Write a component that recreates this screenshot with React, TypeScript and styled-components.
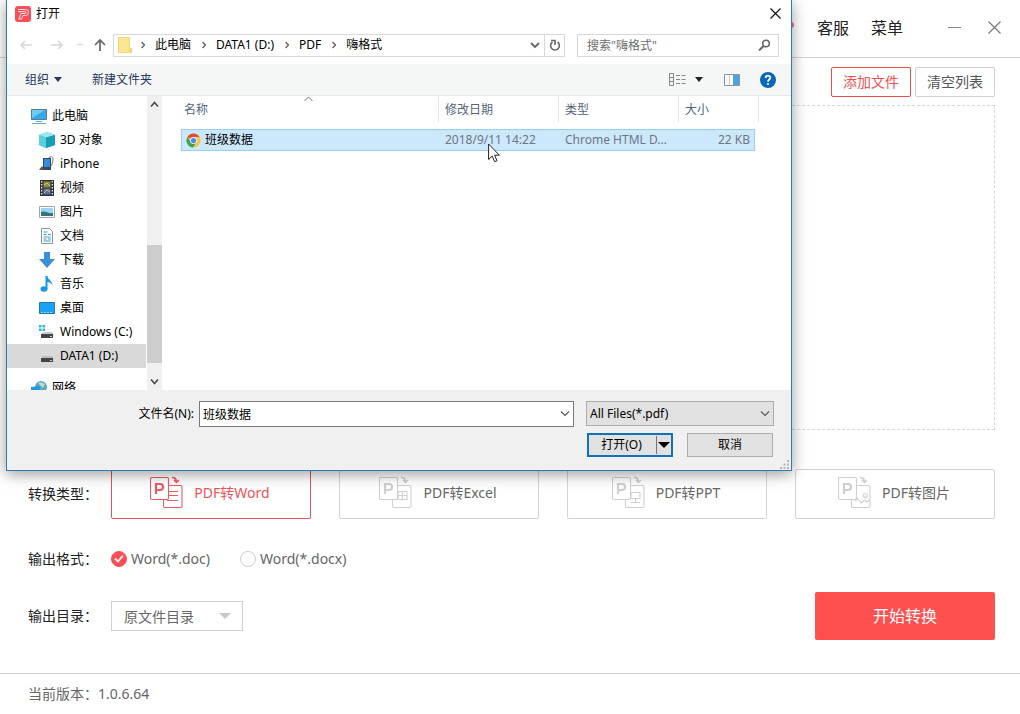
import React, { useState } from 'react';
import styled, { createGlobalStyle, css } from 'styled-components';

const GlobalStyle = createGlobalStyle`
  * { box-sizing: border-box; }
  body { margin: 0; background: #fff; }
  body, button, input, select {
    font-family: "Noto Sans", "Noto Sans CJK SC", sans-serif;
  }
  button { padding: 0; border: 0; background: none; color: inherit; }
  svg { display: block; flex: none; }
`;

/* ---------- main window ---------- */

const AppWindow = styled.div`
  position: relative;
  display: flex;
  flex-direction: column;
  min-height: 100vh;
  overflow: hidden;
  font-size: 14px;
  line-height: 20px;
  color: #222;
`;

const Header = styled.header`
  display: flex;
  align-items: center;
  justify-content: flex-end;
  height: 58px;
  padding: 0 18px 2px;
  border-bottom: 1px solid #d2d4d6;
`;

const HeaderLink = styled.button`
  margin-right: 22px;
  font-size: 16px;
  line-height: 24px;
  color: #222;
`;

const Dot = styled.span`
  width: 6px;
  height: 6px;
  margin: 0 23px 6px 0;
  border-radius: 50%;
  background: #f76f8e;
`;

const WindowControls = styled.div`
  display: flex;
  gap: 24px;
  margin-left: 21px;
`;

const WindowButton = styled.button`
  display: grid;
  place-items: center;
  width: 16px;
  height: 16px;
`;

const Main = styled.main`
  display: flex;
  flex: 1;
  flex-direction: column;
  padding: 9px 25px 33px 28px;
`;

const Actions = styled.div`
  display: flex;
  justify-content: flex-end;
  gap: 4px;
`;

const ActionButton = styled.button<{ $primary?: boolean }>`
  width: 80px;
  height: 30px;
  padding-bottom: 2px;
  border: 1px solid ${p => (p.$primary ? '#e8504f' : '#d0d0d0')};
  border-radius: 2px;
  font-size: 14px;
  color: ${p => (p.$primary ? '#f0504f' : '#555')};
`;

const DropArea = styled.section`
  flex: 1;
  min-height: 240px;
  margin-top: 8px;
  border: 1px dashed #d8d8d8;
`;

const FormRow = styled.div<{ $top: number }>`
  display: flex;
  align-items: center;
  margin-top: ${p => p.$top}px;
`;

const RowLabel = styled.span`
  flex: none;
  width: 83px;
`;

const Types = styled.div`
  display: grid;
  flex: 1;
  grid-template-columns: repeat(4, 1fr);
  gap: 28px;
`;

const TypeCard = styled.button<{ $active?: boolean }>`
  display: flex;
  align-items: center;
  justify-content: center;
  gap: 11px;
  height: 50px;
  padding: 0 2px 4px 0;
  border: 1px solid ${p => (p.$active ? '#e8505b' : '#d4d4d4')};
  border-radius: 2px;
  font-size: 14px;
  color: ${p => (p.$active ? '#f0525a' : '#666')};
  svg { color: ${p => (p.$active ? '#ee5a62' : '#cfcfcf')}; }
`;

const Option = styled.label`
  position: relative;
  display: flex;
  align-items: center;
  gap: 4px;
  margin-right: 30px;
  color: #666;
  svg { position: absolute; left: 3px; top: 4px; }
`;

const Radio = styled.input`
  appearance: none;
  width: 16px;
  height: 16px;
  margin: 0;
  border: 1px solid #ccc;
  border-radius: 50%;
  &:checked { border-color: #fb4f55; background: #fb4f55; }
`;

const SelectBox = styled.div`
  position: relative;
  svg { position: absolute; right: 12px; top: 12px; pointer-events: none; }
`;

const FolderSelect = styled.select`
  appearance: none;
  display: block;
  width: 132px;
  height: 30px;
  padding: 1px 12px 0;
  border: 1px solid #d0d0d0;
  background: #fff;
  font-size: 14px;
  color: #666;
`;

const StartButton = styled.button`
  width: 180px;
  height: 48px;
  margin-left: auto;
  padding-bottom: 2px;
  border-radius: 2px;
  background: #ff5050;
  font-size: 16px;
  color: #fff;
`;

const StatusBar = styled.footer`
  height: 41px;
  padding: 10px 28px;
  border-top: 1px solid #d4d4d4;
  color: #666;
`;

/* ---------- file dialog ---------- */

const Dialog = styled.div`
  position: absolute;
  left: 6px;
  top: 0;
  width: 786px;
  border: 1px solid #2c7cb0;
  border-top: 0;
  background: #fff;
  box-shadow: 0 3px 14px rgba(0, 0, 0, 0.4);
  font-size: 12px;
  line-height: 16px;
  color: #000;
`;

const TitleBar = styled.div`
  display: flex;
  align-items: center;
  gap: 5px;
  height: 27px;
  padding: 0 10px 0 8px;
  button { margin-left: auto; }
`;

const NavBar = styled.div`
  display: flex;
  align-items: center;
  height: 37px;
  padding: 0 12px 1px;
`;

const NavButton = styled.button<{ $gap: number }>`
  margin-right: ${p => p.$gap}px;
`;

const AddressBar = styled.div`
  display: flex;
  align-items: center;
  flex: 1;
  height: 23px;
  margin-right: 12px;
  padding-left: 4px;
  border: 1px solid #d9d9d9;
`;

const Crumb = styled.button`
  display: flex;
  align-items: center;
  gap: 10px;
  margin-right: 2px;
  padding-left: 9px;
  font-size: 12px;
  line-height: 16px;
`;

const AddressMenu = styled.button`
  margin-left: auto;
  margin-right: 4px;
`;

const Refresh = styled.button`
  display: grid;
  place-items: center;
  width: 20px;
  height: 21px;
  border-left: 1px solid #d9d9d9;
`;

const SearchBox = styled.label`
  display: flex;
  align-items: center;
  width: 202px;
  height: 23px;
  padding: 0 7px 0 9px;
  border: 1px solid #d9d9d9;
`;

const SearchInput = styled.input`
  flex: 1;
  min-width: 0;
  padding: 0;
  border: 0;
  outline: 0;
  font-size: 12px;
  &::placeholder { color: #6d6d6d; opacity: 1; }
`;

const CommandBar = styled.div`
  display: flex;
  align-items: center;
  height: 32px;
  padding: 0 15px 0 18px;
  border-bottom: 1px solid #e3e8ea;
  background: #f5f7f7;
  color: #26385c;
`;

const Command = styled.button<{ $gap: number }>`
  display: flex;
  align-items: center;
  gap: 5px;
  margin-right: ${p => p.$gap}px;
  font-size: 12px;
  line-height: 16px;
`;

const ViewCommand = styled(Command)`
  gap: 9px;
`;

const Spacer = styled.span`
  flex: 1;
`;

const DialogBody = styled.div`
  display: flex;
  height: 294px;
  overflow: hidden;
`;

const Sidebar = styled.ul`
  width: 139px;
  margin: 0 1px 0 0;
  padding: 8px 0 0;
  list-style: none;
`;

const Place = styled.li<{ $root?: boolean; $selected?: boolean; $apart?: boolean }>`
  display: flex;
  align-items: center;
  gap: 5px;
  height: 24px;
  margin-top: ${p => (p.$apart ? 8 : 0)}px;
  padding-left: ${p => (p.$root ? 24 : 32)}px;
  white-space: nowrap;
  ${p => p.$selected && css`background: #d9d9d9;`}
`;

const ScrollTrack = styled.div`
  display: flex;
  flex-direction: column;
  align-items: center;
  width: 15px;
  margin-right: 1px;
  padding: 5px 0;
  background: #f0f0f0;
`;

const ScrollThumb = styled.div`
  width: 15px;
  height: 118px;
  margin: auto 0 15px;
  background: #cdcdcd;
`;

const FileArea = styled.div`
  position: relative;
  flex: 1;
  padding: 0 36px 0 18px;
`;

const FileTable = styled.table`
  width: 100%;
  table-layout: fixed;
  border-spacing: 0;
`;

const ColumnHead = styled.th<{ $width?: number }>`
  position: relative;
  width: ${p => (p.$width ? p.$width + 'px' : 'auto')};
  height: 33px;
  padding: 0 0 6px ${p => (p.$width ? 6 : 3)}px;
  font-weight: 400;
  text-align: left;
  color: #56647b;
  &::after {
    content: "";
    position: absolute;
    right: 0;
    top: 0;
    height: 26px;
    border-right: 1px solid #e5e5e5;
  }
  &:last-child::after { right: -4px; }
`;

const Cell = styled.td<{ $right?: boolean }>`
  height: 22px;
  padding: 0 4px 0 6px;
  border: solid #99cdf2;
  border-width: 1px 0;
  background: #cce8ff;
  color: #6d7780;
  text-align: ${p => (p.$right ? 'right' : 'left')};
  white-space: nowrap;
  &:first-child { border-left-width: 1px; padding-left: 4px; color: #000; }
  &:last-child { border-right-width: 1px; }
`;

const FileName = styled.span`
  display: flex;
  align-items: center;
  gap: 4px;
`;

const SortMark = styled.svg`
  position: absolute;
  left: 141px;
  top: 0;
`;

const Pointer = styled.svg`
  position: absolute;
  left: 481px;
  top: 143px;
`;

const DialogFooter = styled.div`
  position: relative;
  height: 80px;
  padding: 11px 17px 0 16px;
  background: #f0f0f0;
`;

const FooterLine = styled.div`
  display: flex;
  justify-content: flex-end;
  align-items: flex-start;
  margin-bottom: 6px;
`;

const NameLabel = styled.label`
  margin: 5px 5px 0 0;
`;

const Combo = styled.div<{ $width: number }>`
  position: relative;
  width: ${p => p.$width}px;
  svg { position: absolute; right: 4px; top: 10px; pointer-events: none; }
  & + & { margin-left: 12px; }
`;

const NameInput = styled.input`
  display: block;
  width: 100%;
  height: 26px;
  padding: 0 20px 0 3px;
  border: 1px solid #7a7a7a;
  background: #fff;
  font-size: 12px;
`;

const FilterSelect = styled.select`
  appearance: none;
  display: block;
  width: 100%;
  height: 25px;
  padding: 0 3px;
  border: 1px solid #adadad;
  border-radius: 0;
  background: #e1e1e1;
  font-size: 12px;
  color: #000;
`;

const SplitButton = styled.div`
  display: flex;
  width: 86px;
  height: 24px;
  margin-right: 14px;
  border: 2px solid #1172b6;
  background: #e1e1e1;
`;

const OpenButton = styled.button`
  flex: 1;
  padding-right: 2px;
  font-size: 12px;
  line-height: 16px;
`;

const OpenMenu = styled.button`
  display: grid;
  place-items: center;
  width: 15px;
  margin: 1px 0;
  border-left: 1px solid #777;
`;

const CancelButton = styled.button`
  width: 86px;
  height: 24px;
  margin-right: 1px;
  border: 1px solid #adadad;
  background: #e1e1e1;
  font-size: 12px;
  line-height: 16px;
`;

const Grip = styled.svg`
  position: absolute;
  right: 2px;
  bottom: 1px;
`;

/* ---------- drawings ---------- */

const Chevron = ({ d, w, h, color = '#555', width = 1.5 }: { d: string; w: number; h: number; color?: string; width?: number }) => (
  <svg width={w} height={h} viewBox={`0 0 ${w} ${h}`} fill="none" stroke={color} strokeWidth={width}>
    <path d={d} />
  </svg>
);

const Triangle = ({ w, h, color }: { w: number; h: number; color: string }) => (
  <svg width={w} height={h} viewBox={`0 0 ${w} ${h}`} fill={color}>
    <path d={`M0 0H${w}L${w / 2} ${h}Z`} />
  </svg>
);

const Cross = ({ size, color }: { size: number; color: string }) => (
  <svg width={size} height={size} viewBox={`0 0 ${size} ${size}`} stroke={color} strokeWidth="1.2">
    <path d={`M.5 .5L${size - 0.5} ${size - 0.5}M${size - 0.5} .5L.5 ${size - 0.5}`} />
  </svg>
);

const badges = {
  word: <path d="M19 15.500h9M19 19.500h9M17 24.500h11" />,
  excel: <path d="M19 15.500h9v8h-9zM23.500 15.500v8M19 19.500h9" />,
  ppt: <path d="M19 16.500h9v6h-9zM23.500 22.500v4M19 26.500h9" />,
  image: (
    <>
      <circle cx="27.500" cy="19.500" r="2" />
      <path d="M17 25l2.500-2.500 4 4.500 3-3 2 2 3.500-2" />
    </>
  ),
};

const ConvertIcon = ({ kind }: { kind: keyof typeof badges }) => (
  <svg width="33" height="32" viewBox="0 0 33 32" fill="none" stroke="currentColor" strokeWidth="1.100">
    <rect x=".5" y="1.500" width="18" height="22" rx="1.500" />
    <path d="M18.500 9.500H30.500a1.500 1.500 0 0 1 1.500 1.500V30a1.500 1.500 0 0 1-1.500 1.500H15a1.500 1.500 0 0 1-1.500-1.500V23.500" />
    <path d="M22 1.500c3 0 4.500 1.500 4.500 4.500M24 4l2.500 2.500L29 4" strokeWidth="1.500" />
    <path d="M6 18V8h4a2.800 2.800 0 0 1 0 6H6" strokeWidth="2.200" />
    {badges[kind]}
  </svg>
);

const AppLogo = () => (
  <svg width="16" height="16" viewBox="0 0 16 16" fill="none">
    <rect width="16" height="16" rx="3" fill="#f4505a" />
    <path d="M3 3.500h7.500a3 3 0 0 1 0 6H8L6.500 13H3.800L6 7.500h4a.800.800 0 0 0 0-1.800H3" stroke="#fff" strokeWidth=".8" />
  </svg>
);

const Arrow = ({ d, color, w }: { d: string; color: string; w: number }) => (
  <svg width={w} height="14" viewBox={`0 0 ${w} 14`} fill="none" stroke={color} strokeWidth="1.700">
    <path d={d} />
  </svg>
);

const Chrome = () => (
  <svg width="15" height="15" viewBox="0 0 16 16">
    <circle cx="8" cy="8" r="7.500" fill="#f7c640" />
    <path d="M8 8L1.500 4.250A7.500 7.500 0 0 1 14.500 4.250H8Z" fill="#dd4b3e" />
    <path d="M1.500 4.250A7.500 7.500 0 0 0 7.600 15.500L11 9.500 8 8 5 9.500Z" fill="#3aa457" />
    <circle cx="8" cy="8" r="3.700" fill="#f4f8f6" />
    <circle cx="8" cy="8" r="2.800" fill="#4a8af0" />
  </svg>
);

const placeArt: Record<string, React.ReactNode> = {
  pc: (
    <>
      <path d="M.5 1.500h15v10H.5z" fill="#35a8e8" stroke="#4f7f9d" />
      <path d="M1 2h13L1 10z" fill="#73caf5" />
      <path d="M5 13.500h6M1 15.500h14" stroke="#7aa1bb" />
    </>
  ),
  cube: (
    <>
      <path d="M0 3l8-3 8 3v10l-9 3-7-3z" fill="#2bb6c9" />
      <path d="M0 3l8-3 8 3-9 2.500z" fill="#9fe7ee" />
      <path d="M0 3l7 2.500V16l-7-3z" fill="#5bd0dc" />
      <path d="M7 5.500L16 3v10l-9 3z" fill="#159db8" />
    </>
  ),
  phone: (
    <>
      <path d="M9 3c1-3 5-3 5 0s-1 5-2 7" fill="none" stroke="#777" />
      <path d="M4 2h8v12H4z" fill="#34495c" />
      <path d="M5 3h6v8H5z" fill="#2f8ede" />
      <path d="M0 14l3-4 3 4z" fill="#555" />
    </>
  ),
  film: (
    <>
      <path d="M1 0h14v16H1z" fill="#30323b" />
      <path d="M4.500 1.500h7v6h-7z" fill="#8b8d3f" />
      <path d="M4.500 8.500h7v6h-7z" fill="#5a6da8" />
      <path d="M2.700 1v15M13.300 1v15" stroke="#e9e9e9" strokeWidth="1.300" strokeDasharray="1.500 1.500" />
      <path d="M5 5l3-2 3 3M5 13l3-3 3 2" stroke="#d8c75a" fill="none" />
    </>
  ),
  picture: (
    <>
      <path d="M.5 2.500h15v11H.5z" fill="#fff" stroke="#9aa7ad" />
      <path d="M2 4h12v8H2z" fill="#9bd4f3" />
      <path d="M2 8c4-2 7 2 12 1v3H2z" fill="#35737e" />
    </>
  ),
  doc: (
    <>
      <path d="M2.500.5h8l3 3v12h-11z" fill="#fff" stroke="#8a979d" />
      <path d="M4.500 4h4M4.500 6.500h3M9 6.500h3M4.500 9h7M4.500 11h3M9 11h3M4.500 13h7" stroke="#3c9cc4" />
    </>
  ),
  down: <path d="M5 0h6v7h5l-8 9-8-9h5z" fill="#3b8fd6" />,
  note: (
    <>
      <ellipse cx="5" cy="13" rx="3.500" ry="2.800" fill="#1499e8" />
      <path d="M6.500 0h2c0 4 5 4 5 10-1-3-3-4-5-4v7h-2z" fill="#1499e8" />
    </>
  ),
  desktop: (
    <>
      <path d="M.5 2.500h15v11H.5z" fill="#1aa0f5" stroke="#2474ae" />
      <path d="M2 12.500h12" stroke="#8fd5ff" strokeDasharray="2 1" />
    </>
  ),
  winDrive: (
    <>
      <path d="M0 1h2.500v2.500H0zM3.500 1H6v2.500H3.500zM0 4.500h2.500V7H0zM3.500 4.500H6V7H3.500z" fill="#22b8dc" />
      <path d="M4 8h9l2 3H2z" fill="#c9c9c9" />
      <path d="M2 10h12v4H2z" fill="#42464a" />
      <path d="M11 12.500h2" stroke="#b7e0b0" />
    </>
  ),
  drive: (
    <>
      <path d="M4 8h9l2 3H2z" fill="#bbb" />
      <path d="M2 10h12v4H2z" fill="#42464a" />
      <path d="M11 12.500h2" stroke="#b7e0b0" />
    </>
  ),
  network: (
    <>
      <circle cx="10" cy="7" r="6" fill="#5fa7c6" />
      <path d="M7 3c3-2 5 0 7 1l-2 4z" fill="#b9dec9" />
      <path d="M0 7l9-1v8H0z" fill="#2996d8" />
    </>
  ),
};

const PlaceIcon = ({ name }: { name: string }) => (
  <svg width="16" height="16" viewBox="0 0 16 16">{placeArt[name]}</svg>
);

/* ---------- data ---------- */

const places = [
  { icon: 'pc', label: '此电脑', root: true },
  { icon: 'cube', label: '3D 对象' },
  { icon: 'phone', label: 'iPhone' },
  { icon: 'film', label: '视频' },
  { icon: 'picture', label: '图片' },
  { icon: 'doc', label: '文档' },
  { icon: 'down', label: '下载' },
  { icon: 'note', label: '音乐' },
  { icon: 'desktop', label: '桌面' },
  { icon: 'winDrive', label: 'Windows (C:)' },
  { icon: 'drive', label: 'DATA1 (D:)', selected: true },
  { icon: 'network', label: '网络', root: true, apart: true },
];

const crumbs = ['此电脑', 'DATA1 (D:)', 'PDF', '嗨格式'];

const types: { kind: keyof typeof badges; label: string }[] = [
  { kind: 'word', label: 'PDF转Word' },
  { kind: 'excel', label: 'PDF转Excel' },
  { kind: 'ppt', label: 'PDF转PPT' },
  { kind: 'image', label: 'PDF转图片' },
];

const OpenDialog = () => (
  <Dialog role="dialog" aria-label="打开">
    <TitleBar>
      <AppLogo />
      <span>打开</span>
      <button aria-label="关闭"><Cross size={11} color="#111" /></button>
    </TitleBar>

    <NavBar>
      <NavButton $gap={17} aria-label="后退"><Arrow w={14} d="M13 7H2M6 3L2 7l4 4" color="#d8d8d8" /></NavButton>
      <NavButton $gap={13} aria-label="前进"><Arrow w={14} d="M1 7h11M8 3l4 4-4 4" color="#d8d8d8" /></NavButton>
      <NavButton $gap={11} aria-label="最近"><Chevron w={6} h={4} d="M0 1.500h6" color="#ddd" /></NavButton>
      <NavButton $gap={7} aria-label="向上"><Arrow w={12} d="M6 13V2M1 7l5-5 5 5" color="#666" /></NavButton>
      <AddressBar>
        <svg width="14" height="16" viewBox="0 0 14 16">
          <path d="M0 0h12v11h2v5H0z" fill="#f3d777" />
          <path d="M1 1h10v14H1z" fill="#fbe695" />
        </svg>
        {crumbs.map(c => (
          <Crumb key={c}>
            <Chevron w={4} h={8} d="M.5 1L3.500 4 .5 7" color="#666" />
            {c}
          </Crumb>
        ))}
        <AddressMenu aria-label="历史记录"><Chevron w={10} h={7} d="M1 1l4 4 4-4" color="#666" width={1.8} /></AddressMenu>
        <Refresh aria-label="刷新">
          <svg width="12" height="13" viewBox="0 0 12 13" fill="none" stroke="#666" strokeWidth="1.600">
            <path d="M8.500 3A4.400 4.400 0 1 1 3.500 3" />
            <path d="M2 1.500h4V6" />
          </svg>
        </Refresh>
      </AddressBar>
      <SearchBox>
        <SearchInput aria-label="搜索" placeholder={'搜索"嗨格式"'} />
        <svg width="13" height="12" viewBox="0 0 13 12" fill="none" stroke="#666" strokeWidth="1.600">
          <circle cx="8" cy="4.500" r="3.300" />
          <path d="M5.500 7L1 11.500" strokeWidth="2" />
        </svg>
      </SearchBox>
    </NavBar>

    <CommandBar>
      <Command $gap={30}>组织 <Triangle w={8} h={5} color="#26385c" /></Command>
      <Command $gap={0}>新建文件夹</Command>
      <Spacer />
      <ViewCommand $gap={21} aria-label="更改视图">
        <svg width="17" height="13" viewBox="0 0 17 13" fill="none" stroke="#888">
          <path d="M.5.5h4v12h-4zM.5 4.500h4M.5 8.500h4M7 2.500h4M12.500 2.500h4M7 6.500h4M12.500 6.500h4M7 10.500h4M12.500 10.500h4" />
        </svg>
        <Triangle w={8} h={5} color="#222" />
      </ViewCommand>
      <Command $gap={20} aria-label="预览窗格">
        <svg width="16" height="12" viewBox="0 0 16 12">
          <path d="M.5.5h15v11H.5z" fill="#fff" stroke="#8795a0" />
          <path d="M9 1h6v10H9z" fill="#4ba3e0" />
          <path d="M5.500 1v10" stroke="#c0cad0" />
        </svg>
      </Command>
      <Command $gap={0} aria-label="帮助">
        <svg width="16" height="16" viewBox="0 0 16 16" fill="none">
          <circle cx="8" cy="8" r="8" fill="#0867b8" />
          <path d="M5.700 6c0-3 4.600-3 4.600-.3C10.300 7.500 8 7.500 8 9.700" stroke="#fff" strokeWidth="1.800" />
          <circle cx="8" cy="12" r="1.100" fill="#fff" />
        </svg>
      </Command>
    </CommandBar>

    <DialogBody>
      <Sidebar>
        {places.map(p => (
          <Place key={p.label} $root={p.root} $selected={p.selected} $apart={p.apart}>
            <PlaceIcon name={p.icon} />
            {p.label}
          </Place>
        ))}
      </Sidebar>
      <ScrollTrack>
        <Chevron w={9} h={7} d="M1 5.500l3.500-4 3.500 4" color="#505050" width={1.8} />
        <ScrollThumb />
        <Chevron w={9} h={7} d="M1 1.500l3.500 4 3.500-4" color="#505050" width={1.8} />
      </ScrollTrack>
      <FileArea>
        <SortMark width="9" height="6" viewBox="0 0 9 6" fill="none" stroke="#777">
          <path d="M.5 5l4-4 4 4" />
        </SortMark>
        <FileTable>
          <thead>
            <tr>
              <ColumnHead>名称</ColumnHead>
              <ColumnHead $width={120}>修改日期</ColumnHead>
              <ColumnHead $width={120}>类型</ColumnHead>
              <ColumnHead $width={76}>大小</ColumnHead>
            </tr>
          </thead>
          <tbody>
            <tr>
              <Cell><FileName><Chrome />班级数据</FileName></Cell>
              <Cell>2018/9/11 14:22</Cell>
              <Cell>Chrome HTML D...</Cell>
              <Cell $right>22 KB</Cell>
            </tr>
          </tbody>
        </FileTable>
      </FileArea>
    </DialogBody>

    <DialogFooter>
      <FooterLine>
        <NameLabel htmlFor="file-name">文件名(N):</NameLabel>
        <Combo $width={375}>
          <NameInput id="file-name" defaultValue="班级数据" />
          <Chevron w={10} h={6} d="M1 .5l4 4 4-4" width={1.1} />
        </Combo>
        <Combo $width={188}>
          <FilterSelect aria-label="文件类型"><option>All Files(*.pdf)</option></FilterSelect>
          <Chevron w={10} h={6} d="M1 .5l4 4 4-4" width={1.1} />
        </Combo>
      </FooterLine>
      <FooterLine>
        <SplitButton>
          <OpenButton>打开(O)</OpenButton>
          <OpenMenu aria-label="打开选项"><Triangle w={12} h={6} color="#000" /></OpenMenu>
        </SplitButton>
        <CancelButton>取消</CancelButton>
      </FooterLine>
      <Grip width="9" height="9" viewBox="0 0 9 9" fill="#b5b5b5">
        <path d="M7 0h2v2H7zM7 3.500h2v2H7zM7 7h2v2H7zM3.500 3.500h2v2h-2zM3.500 7h2v2h-2zM0 7h2v2H0z" />
      </Grip>
    </DialogFooter>

    <Pointer width="12" height="20" viewBox="0 0 12 20">
      <path d="M.6 1v15.500l3.600-3.400 2.500 5.600 2.300-1-2.400-5.500h4.800z" fill="#fff" stroke="#222" />
    </Pointer>
  </Dialog>
);

export default function App() {
  const [format, setFormat] = useState('doc');
  const [type, setType] = useState('word');

  return (
    <AppWindow>
      <GlobalStyle />
      <Header>
        <Dot />
        <HeaderLink>客服</HeaderLink>
        <HeaderLink>菜单</HeaderLink>
        <WindowControls>
          <WindowButton aria-label="最小化"><Chevron w={13} h={2} d="M0 .5h13" color="#888" width={1} /></WindowButton>
          <WindowButton aria-label="关闭"><Cross size={13} color="#777" /></WindowButton>
        </WindowControls>
      </Header>

      <Main>
        <Actions>
          <ActionButton $primary>添加文件</ActionButton>
          <ActionButton>清空列表</ActionButton>
        </Actions>
        <DropArea />

        <FormRow $top={39}>
          <RowLabel>转换类型：</RowLabel>
          <Types>
            {types.map(t => (
              <TypeCard key={t.kind} $active={t.kind === type} onClick={() => setType(t.kind)}>
                <ConvertIcon kind={t.kind} />
                {t.label}
              </TypeCard>
            ))}
          </Types>
        </FormRow>

        <FormRow $top={30}>
          <RowLabel>输出格式：</RowLabel>
          {['doc', 'docx'].map(f => (
            <Option key={f}>
              <Radio type="radio" name="format" checked={format === f} onChange={() => setFormat(f)} />
              {format === f && <Chevron w={10} h={10} d="M1 5.500l3 3 5-6" color="#fff" width={1.8} />}
              Word(*.{f})
            </Option>
          ))}
        </FormRow>

        <FormRow $top={23}>
          <RowLabel>输出目录：</RowLabel>
          <SelectBox>
            <FolderSelect aria-label="输出目录"><option>原文件目录</option></FolderSelect>
            <Triangle w={12} h={6} color="#c8c8c8" />
          </SelectBox>
          <StartButton>开始转换</StartButton>
        </FormRow>
      </Main>

      <StatusBar>当前版本：1.0.6.64</StatusBar>
      <OpenDialog />
    </AppWindow>
  );
}
